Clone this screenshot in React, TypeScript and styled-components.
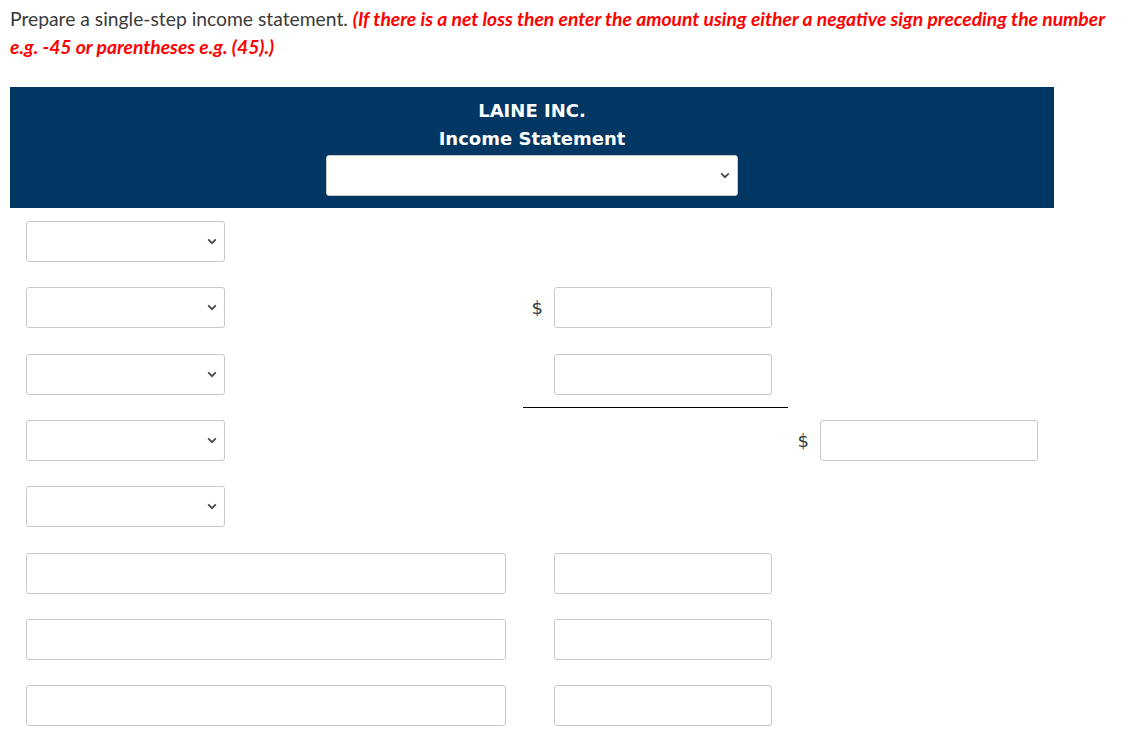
import styled, { createGlobalStyle } from 'styled-components'

const GlobalStyle = createGlobalStyle`
  html, body {
    margin: 0;
    padding: 0;
    background: #ffffff;
  }
  body {
    font-family: Lato, 'Open Sans', sans-serif;
    color: #333333;
  }
`

const rows = [
  { kind: 'select', dollar1: false, amount1: false, dollar2: false, amount2: false },
  { kind: 'select', dollar1: true, amount1: true, dollar2: false, amount2: false },
  { kind: 'select', dollar1: false, amount1: true, dollar2: false, amount2: false, rule: true },
  { kind: 'select', dollar1: false, amount1: false, dollar2: true, amount2: true },
  { kind: 'select', dollar1: false, amount1: false, dollar2: false, amount2: false },
  { kind: 'text', dollar1: false, amount1: true, dollar2: false, amount2: false },
  { kind: 'text', dollar1: false, amount1: true, dollar2: false, amount2: false },
  { kind: 'text', dollar1: false, amount1: true, dollar2: false, amount2: false },
]

function Chevron() {
  return (
    <ChevronIcon width="10" height="7" viewBox="0 0 10 7" aria-hidden="true">
      <path d="M1.2 1.4 L5 5.2 L8.8 1.4" fill="none" stroke="#4a4a4a" strokeWidth="1.8" />
    </ChevronIcon>
  )
}

function Dropdown({ wide }: { wide?: boolean }) {
  return (
    <DropWrap $wide={wide}>
      <DropSelect defaultValue="">
        <option value=""></option>
      </DropSelect>
      <Chevron />
    </DropWrap>
  )
}

export default function App() {
  return (
    <Page>
      <GlobalStyle />
      <Prompt>
        Prepare a single-step income statement.{' '}
        <Warning>
          (If there is a net loss then enter the amount using either a negative sign preceding the number
          e.g. -45 or parentheses e.g. (45).)
        </Warning>
      </Prompt>

      <Header>
        <Company>LAINE INC.</Company>
        <Title>Income Statement</Title>
        <Dropdown wide />
      </Header>

      <Sheet>
        {rows.map((row, i) => (
          <Row key={i}>
            {row.kind === 'select' ? <Dropdown /> : <WideInput type="text" />}
            <Dollar>{row.dollar1 ? '$' : ''}</Dollar>
            <AmountCell $rule={row.rule}>{row.amount1 && <Amount type="text" />}</AmountCell>
            <Dollar>{row.dollar2 ? '$' : ''}</Dollar>
            <AmountCell>{row.amount2 && <Amount type="text" />}</AmountCell>
          </Row>
        ))}
      </Sheet>
    </Page>
  )
}

const Page = styled.div`
  padding: 5px 10px 10px 10px;
`

const Prompt = styled.p`
  margin: 0;
  max-width: 1120px;
  font-size: 19.3px;
  line-height: 28px;
  color: #3a3a3a;
`

const Warning = styled.span`
  color: #ff0000;
  font-weight: 700;
  font-style: italic;
`

const Header = styled.div`
  margin-top: 26px;
  width: 1044px;
  background-color: #023663;
  padding: 10px 0 12px;
  box-sizing: border-box;
  display: flex;
  flex-direction: column;
  align-items: center;
  color: #ffffff;
  font-family: 'DejaVu Sans', Verdana, sans-serif;
  font-weight: 700;
`

const Company = styled.div`
  font-size: 18px;
  line-height: 28px;
`

const Title = styled.div`
  font-size: 18px;
  line-height: 28px;
  margin-bottom: 2px;
`

const DropWrap = styled.div<{ $wide?: boolean }>`
  position: relative;
  width: ${(p) => (p.$wide ? '412px' : '199px')};
  height: 41px;
`

const DropSelect = styled.select`
  appearance: none;
  width: 100%;
  height: 100%;
  box-sizing: border-box;
  border: 1px solid #c8c8c8;
  border-radius: 3px;
  background: #ffffff;
  margin: 0;
`

const ChevronIcon = styled.svg`
  position: absolute;
  right: 8px;
  top: 17px;
  pointer-events: none;
`

const Sheet = styled.div`
  display: flex;
  flex-direction: column;
  gap: 25.33px;
  padding: 13px 0 0 16px;
`

const Row = styled.div`
  display: grid;
  grid-template-columns: 480px 48px 218px 48px 218px;
  height: 41px;
  align-items: center;
`

const Dollar = styled.div`
  text-align: right;
  padding-right: 11px;
  font-family: 'DejaVu Sans', Verdana, sans-serif;
  font-size: 18px;
  color: #2a3b4c;
`

const AmountCell = styled.div<{ $rule?: boolean }>`
  position: relative;
  height: 41px;

  ${(p) =>
    p.$rule &&
    `
    &::after {
      content: '';
      position: absolute;
      left: -31px;
      right: -16px;
      bottom: -13px;
      height: 1px;
      background: #000000;
    }
  `}
`

const Amount = styled.input`
  width: 100%;
  height: 41px;
  box-sizing: border-box;
  border: 1px solid #c8c8c8;
  border-radius: 3px;
  margin: 0;
  padding: 0 6px;
  font-size: 16px;
`

const WideInput = styled(Amount)`
  width: 480px;
`
